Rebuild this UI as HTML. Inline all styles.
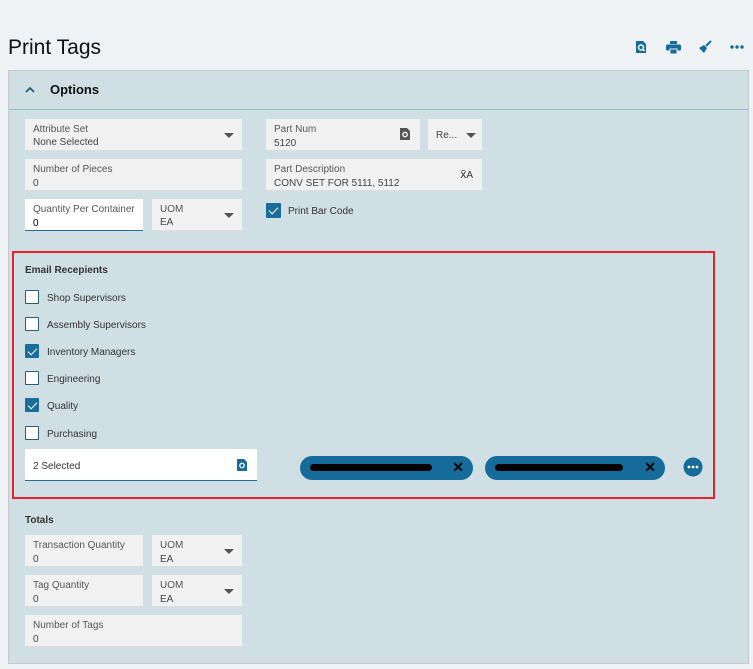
<!DOCTYPE html>
<html><head><meta charset="utf-8"><style>
*{box-sizing:border-box;margin:0;padding:0}
body{width:753px;height:669px;background:#eef2f5;font-family:"Liberation Sans",sans-serif;position:relative;overflow:hidden;color:#333}
.a{position:absolute}
h1{position:absolute;left:8px;top:36px;font-size:21px;font-weight:normal;color:#111}
.panel{position:absolute;left:8px;top:70px;width:741px;height:594px;background:#cfdfe3;border:1px solid #c3c9cc}
.f{position:absolute;background:#f1f1f1;border-bottom:1px solid #ddd}
.f .l{position:absolute;left:8px;top:5px;font-size:10px;color:#555}
.f .v{position:absolute;left:8px;top:19px;font-size:10px;color:#444}
.dd{position:absolute;right:8px;top:14px;width:0;height:0;border-left:5px solid transparent;border-right:5px solid transparent;border-top:5px solid #555}
.cb{position:absolute;width:14px;height:14px;border:1.5px solid #2a5d78;background:#fff;border-radius:1px}
.cb.on{background:#1a6d9a;border-color:#1a6d9a}
.cb.on:after{content:"";position:absolute;left:3.5px;top:0.5px;width:4px;height:8px;border:solid #fff;border-width:0 1.5px 1.5px 0;transform:rotate(45deg)}
.cl{position:absolute;font-size:10px;color:#333}
.chip{position:absolute;background:#156b9a;border-radius:12px;height:24px;top:456px}
.chip .x{position:absolute;right:9px;top:3px;color:#000;font-size:14px;font-weight:bold}
.chip .r{position:absolute;left:10px;top:8px;height:7px;background:#000;border-radius:4px}
</style></head><body>
<h1>Print Tags</h1>
<svg class="a" style="left:634px;top:40px" width="14" height="14" viewBox="0 0 14 14"><path d="M2 1h7l3 3v9H2z" fill="#156b9a"/><circle cx="7" cy="7.5" r="2.5" fill="none" stroke="#fff" stroke-width="1.5"/><path d="M8.7 9.2l1.8 1.8" stroke="#fff" stroke-width="1.5"/></svg>
<svg class="a" style="left:666px;top:41px" width="15" height="13" viewBox="0 0 15 13"><rect x="4" y="0" width="7" height="3" fill="#156b9a"/><rect x="0" y="3.5" width="15" height="6" rx="1.5" fill="#156b9a"/><rect x="4" y="8" width="7" height="5" fill="#156b9a" stroke="#eef2f5" stroke-width="1"/></svg>
<svg class="a" style="left:698px;top:40px" width="14" height="14" viewBox="0 0 14 14"><path d="M13 1L8 6" stroke="#156b9a" stroke-width="2"/><path d="M6 5l3 3-3 5L1 8z" fill="#156b9a"/></svg>
<svg class="a" style="left:730px;top:45px" width="14" height="4"><circle cx="2" cy="2" r="1.7" fill="#156b9a"/><circle cx="7" cy="2" r="1.7" fill="#156b9a"/><circle cx="12" cy="2" r="1.7" fill="#156b9a"/></svg>
<div class="panel"></div>
<div class="a" style="left:9px;top:109px;width:739px;height:1px;background:#8fc0cd"></div>
<svg class="a" style="left:25px;top:86px" width="10" height="7"><path d="M1 6L5 2L9 6" fill="none" stroke="#1a5a7a" stroke-width="1.7"/></svg>
<div class="a" style="left:50px;top:82px;font-size:13px;font-weight:bold;color:#111">Options</div>

<div class="f" style="left:25px;top:119px;width:217px;height:32px"><div class="l">Attribute Set</div><div class="v" style="top:18px">None Selected</div><div class="dd"></div></div>
<div class="f" style="left:266px;top:119px;width:154px;height:32px"><div class="l">Part Num</div><div class="v" style="top:19px">5120</div>
<svg class="a" style="right:10px;top:9px" width="10" height="12" viewBox="0 0 10 12"><path d="M0 0h7l3 3v9H0z" fill="#555"/><circle cx="5" cy="6.5" r="2.2" fill="none" stroke="#fff" stroke-width="1.3"/></svg></div>
<div class="f" style="left:428px;top:119px;width:54px;height:32px"><div class="v" style="top:11px">Re...</div><div class="dd" style="right:6px"></div></div>
<div class="f" style="left:25px;top:159px;width:217px;height:32px"><div class="l">Number of Pieces</div><div class="v">0</div></div>
<div class="f" style="left:266px;top:159px;width:216px;height:32px"><div class="l">Part Description</div><div class="v">CONV SET FOR 5111, 5112</div>
<div class="a" style="right:9px;top:8px;font-size:12px;color:#333">x̄<span style="font-size:10px">A</span></div></div>
<div class="f" style="left:25px;top:199px;width:118px;height:32px;background:#fff;border-bottom:1.5px solid #2a6a8c"><div class="l">Quantity Per Container</div><div class="v" style="color:#000">0</div></div>
<div class="f" style="left:152px;top:199px;width:90px;height:32px"><div class="l">UOM</div><div class="v" style="top:18px">EA</div><div class="dd"></div></div>
<div class="cb on" style="left:266px;top:203px;width:15px;height:15px"></div>
<div class="cl" style="left:288px;top:206px">Print Bar Code</div>

<div class="a" style="left:12px;top:251px;width:703px;height:248px;border:2px solid #e8222b"></div>
<div class="a" style="left:25px;top:265px;font-size:10px;font-weight:bold;color:#333">Email Recepients</div>
<div class="cb" style="left:25px;top:290px"></div><div class="cl" style="left:47px;top:293px">Shop Supervisors</div>
<div class="cb" style="left:25px;top:317px"></div><div class="cl" style="left:47px;top:320px">Assembly Supervisors</div>
<div class="cb on" style="left:25px;top:344px"></div><div class="cl" style="left:47px;top:347px">Inventory Managers</div>
<div class="cb" style="left:25px;top:371px"></div><div class="cl" style="left:47px;top:374px">Engineering</div>
<div class="cb on" style="left:25px;top:398px"></div><div class="cl" style="left:47px;top:401px">Quality</div>
<div class="cb" style="left:25px;top:426px"></div><div class="cl" style="left:47px;top:429px">Purchasing</div>
<div class="a" style="left:25px;top:449px;width:232px;height:32px;background:#fff;border-bottom:1.5px solid #2a6a8c"><div class="cl" style="left:8px;top:12px">2 Selected</div>
<svg class="a" style="left:212px;top:10px" width="10" height="12" viewBox="0 0 10 12"><path d="M0 0h7l3 3v9H0z" fill="#156b9a"/><circle cx="5" cy="6.5" r="2.2" fill="none" stroke="#fff" stroke-width="1.3"/></svg></div>
<div class="chip" style="left:300px;width:173px"><div class="r" style="width:122px"></div><div class="x">✕</div></div>
<div class="chip" style="left:485px;width:180px"><div class="r" style="width:128px"></div><div class="x">✕</div></div>
<svg class="a" style="left:683px;top:457px" width="20" height="20"><circle cx="10" cy="10" r="9.5" fill="#156b9a"/><circle cx="6" cy="10" r="1.4" fill="#fff"/><circle cx="10" cy="10" r="1.4" fill="#fff"/><circle cx="14" cy="10" r="1.4" fill="#fff"/></svg>

<div class="a" style="left:25px;top:515px;font-size:10px;font-weight:bold;color:#333">Totals</div>
<div class="f" style="left:25px;top:535px;width:118px;height:32px"><div class="l">Transaction Quantity</div><div class="v">0</div></div>
<div class="f" style="left:152px;top:535px;width:90px;height:32px"><div class="l">UOM</div><div class="v">EA</div><div class="dd"></div></div>
<div class="f" style="left:25px;top:575px;width:118px;height:32px"><div class="l">Tag Quantity</div><div class="v">0</div></div>
<div class="f" style="left:152px;top:575px;width:90px;height:32px"><div class="l">UOM</div><div class="v">EA</div><div class="dd"></div></div>
<div class="f" style="left:25px;top:615px;width:217px;height:32px"><div class="l">Number of Tags</div><div class="v">0</div></div>
</body></html>
